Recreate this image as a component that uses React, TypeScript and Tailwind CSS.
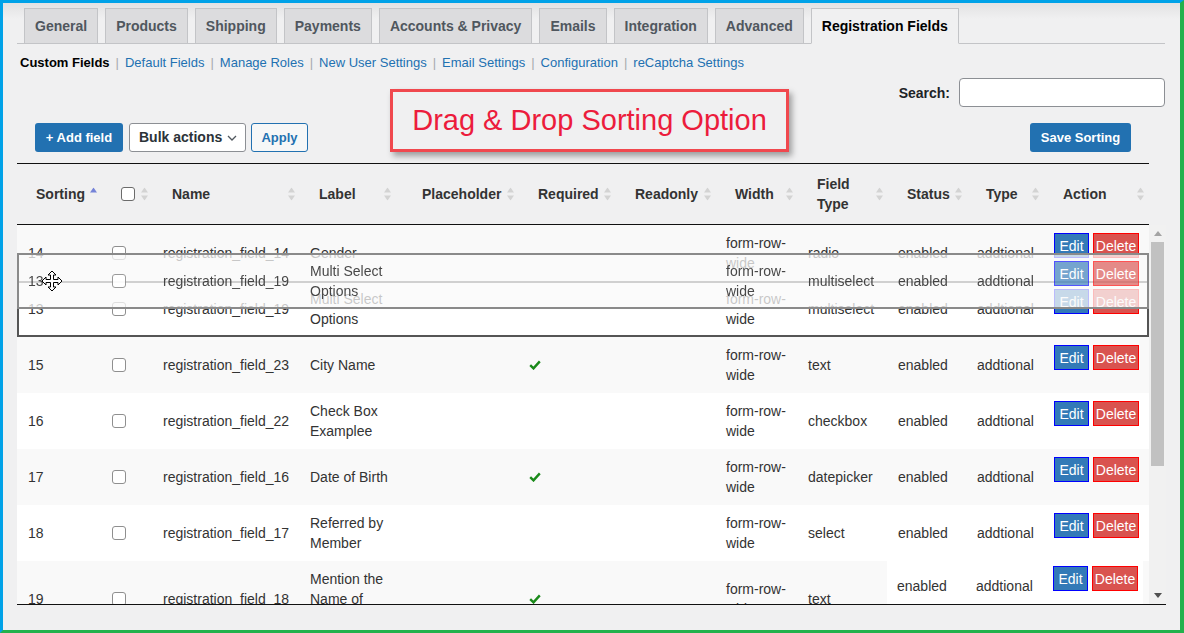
import React from "react";

const COLS =
  "grid grid-cols-[85px_51px_147px_103px_116px_97px_100px_82px_90px_79px_77px_105px]";

type Row = { n: string; name: string; label: string; req?: boolean; type: string };

const row14: Row = { n: "14", name: "registration_field_14", label: "Gender", type: "radio" };
const row13: Row = {
  n: "13",
  name: "registration_field_19",
  label: "Multi Select Options",
  type: "multiselect",
};
const rows: Row[] = [
  { n: "15", name: "registration_field_23", label: "City Name", req: true, type: "text" },
  { n: "16", name: "registration_field_22", label: "Check Box Examplee", type: "checkbox" },
  { n: "17", name: "registration_field_16", label: "Date of Birth", req: true, type: "datepicker" },
  { n: "18", name: "registration_field_17", label: "Referred by Member", type: "select" },
];

function Cb({ header }: { header?: boolean }) {
  return (
    <span
      className={
        "block w-[14px] h-[14px] rounded-[3px] border bg-white " +
        (header ? "border-[#6b6b6b]" : "border-[#8f8f8f]")
      }
    />
  );
}

function Check() {
  return (
    <svg width="12" height="10" viewBox="0 0 12 10" className="block">
      <path d="M1.2 5.2 L4.5 8.4 L10.8 1.4" fill="none" stroke="#1a8a1a" strokeWidth="2.4" />
    </svg>
  );
}

function SortArrows({ asc, cls }: { asc?: boolean; cls: string }) {
  return (
    <svg width="7" height="13" viewBox="0 0 7 13" className={"absolute top-1/2 -translate-y-1/2 " + cls}>
      {asc ? (
        <path d="M0 5 L3.5 0 L7 5 Z" fill="#7583d8" />
      ) : (
        <>
          <path d="M0 5 L3.5 0 L7 5 Z" fill="#d3d3d3" />
          <path d="M0 8 L7 8 L3.5 13 Z" fill="#d3d3d3" />
        </>
      )}
    </svg>
  );
}

function Buttons({ faded }: { faded?: boolean }) {
  return (
    <div className={"flex gap-[4px] " + (faded ? "opacity-75" : "")}>
      <span className="h-[25px] w-[35px] bg-[#337ab7] border border-[#0000ff] text-white text-[14px] leading-none flex items-center justify-center">
        Edit
      </span>
      <span className="h-[25px] w-[46px] bg-[#d9534f] border border-[#ff0000] text-white text-[14px] leading-none flex items-center justify-center">
        Delete
      </span>
    </div>
  );
}

function RowCells({ r, faded, noTail }: { r: Row; faded?: boolean; noTail?: boolean }) {
  return (
    <>
      <div className="pl-[11px]">{r.n}</div>
      <div className="pl-[10px]">
        <Cb />
      </div>
      <div className="pl-[10px] whitespace-nowrap">{r.name}</div>
      <div className="px-[10px]">{r.label}</div>
      <div />
      <div className="pl-[10px]">{r.req ? <Check /> : null}</div>
      <div />
      <div className="px-[10px]">form-row-wide</div>
      <div className="pl-[10px]">{r.type}</div>
      <div className="pl-[10px]">{noTail ? null : "enabled"}</div>
      <div className="pl-[10px]">{noTail ? null : "addtional"}</div>
      <div className="pl-[10px] self-start pt-[8px]">{noTail ? null : <Buttons faded={faded} />}</div>
    </>
  );
}

function MoveCursor() {
  return (
    <svg width="22" height="22" viewBox="0 0 22 22" className="absolute left-[24px] top-[45px]">
      <path
        d="M11 1 L15 5 L12.5 5 L12.5 9.5 L17 9.5 L17 7 L21 11 L17 15 L17 12.5 L12.5 12.5 L12.5 17 L15 17 L11 21 L7 17 L9.5 17 L9.5 12.5 L5 12.5 L5 15 L1 11 L5 7 L5 9.5 L9.5 9.5 L9.5 5 L7 5 Z"
        fill="#ffffff"
        stroke="#000000"
        strokeWidth="1"
        strokeLinejoin="miter"
      />
    </svg>
  );
}

const tabs = [
  "General",
  "Products",
  "Shipping",
  "Payments",
  "Accounts & Privacy",
  "Emails",
  "Integration",
  "Advanced",
  "Registration Fields",
];

const subLinks = [
  "Default Fields",
  "Manage Roles",
  "New User Settings",
  "Email Settings",
  "Configuration",
  "reCaptcha Settings",
];

export default function App() {
  return (
    <div className="relative w-[1184px] h-[633px] overflow-hidden border-solid border-t-[3px] border-l-[3px] border-r-[4px] border-b-[3px] border-t-[#00a2e8] border-l-[#00a2e8] border-r-[#22b14c] border-b-[#22b14c] bg-[#f0f0f1] bg-[linear-gradient(to_bottom,#e2e2e3,#f0f0f1_16px)] font-['Liberation_Sans',Arial,sans-serif] text-[#333]">
      <div className="ml-[14px] w-[1149px]">
        {/* Tabs */}
        <div className="mt-[5px] w-[1148px] flex border-b border-[#c3c4c7]">
          {tabs.map((t, i) => {
            const active = i === tabs.length - 1;
            return (
              <div
                key={t}
                className={
                  "ml-[7px] -mb-px px-[10px] py-[5px] border text-[14px] leading-[24px] font-bold whitespace-nowrap " +
                  (active
                    ? "bg-[#f0f0f1] border-[#c3c4c7] border-b-[#f0f0f1] text-[#000]"
                    : "bg-[#dcdcde] border-[#c3c4c7] text-[#50575e]")
                }
              >
                {t}
              </div>
            );
          })}
        </div>

        {/* Sub navigation */}
        <div className="mt-[9px] pl-[3px] flex text-[13px] leading-[20px] whitespace-nowrap">
          <span className="font-bold text-[#000]">Custom Fields</span>
          {subLinks.map((l) => (
            <React.Fragment key={l}>
              <span className="mx-[6px] text-[#a7aaad]">|</span>
              <span className="text-[#2271b1]">{l}</span>
            </React.Fragment>
          ))}
        </div>

        {/* Search */}
        <div className="mt-[5px] w-[1148px] flex justify-end items-center h-[29px]">
          <span className="text-[14px] font-bold text-[#1d2327] mr-[9px] pt-[2px]">Search:</span>
          <div className="w-[206px] h-[29px] bg-white border border-[#8c8f94] rounded-[4px]" />
        </div>

        {/* Toolbar */}
        <div className="mt-[16px] w-[1132px] px-[18px] flex justify-between h-[29px]">
          <div className="flex">
            <span className="w-[88px] h-[29px] rounded-[3px] bg-[#2271b1] text-white text-[13px] font-bold flex items-center justify-center">
              + Add field
            </span>
            <span className="ml-[6px] w-[117px] h-[29px] rounded-[3px] bg-white border border-[#8c8f94] text-[14px] font-bold text-[#2c3338] flex items-center pl-[9px] pr-[8px] justify-between">
              Bulk actions
              <svg width="10" height="6" viewBox="0 0 10 6">
                <path d="M1 1 L5 5 L9 1" fill="none" stroke="#50575e" strokeWidth="1.3" />
              </svg>
            </span>
            <span className="ml-[5px] w-[57px] h-[29px] rounded-[3px] bg-[#f6f7f7] border border-[#2271b1] text-[#2271b1] text-[13px] font-bold flex items-center justify-center">
              Apply
            </span>
          </div>
          <span className="w-[101px] h-[29px] rounded-[3px] bg-[#2271b1] text-white text-[13px] font-bold flex items-center justify-center">
            Save Sorting
          </span>
        </div>

        {/* Table header */}
        <div className="mt-[11px] w-[1132px] pl-[1px] border-t border-b border-[#111] text-[14px] font-bold text-[#333] leading-[20px]">
          <div className={COLS + " h-[60px]"}>
            {[
              "Sorting",
              "cb",
              "Name",
              "Label",
              "Placeholder",
              "Required",
              "Readonly",
              "Width",
              "Field Type",
              "Status",
              "Type",
              "Action",
            ].map((h, i) => (
              <div key={h} className="relative flex items-center pl-[18px] whitespace-nowrap">
                {h === "cb" ? (
                  <Cb header />
                ) : h === "Field Type" ? (
                  <span>
                    Field
                    <br />
                    Type
                  </span>
                ) : (
                  h
                )}
                <SortArrows asc={i === 0} cls={i === 3 ? "right-[13px]" : "right-[6px]"} />
              </div>
            ))}
          </div>
        </div>

        {/* Table body */}
        <div className="relative w-[1149px] h-[380px] overflow-hidden border-b border-[#111] flex text-[14px] leading-[20px] text-[#333]">
          <div className="relative w-[1132px]">
            <div className={COLS + " items-center h-[56px] bg-[#f9f9f9]"}>
              <RowCells r={row14} />
            </div>
            <div className={COLS + " items-center h-[56px] bg-white"}>
              <RowCells r={row13} />
            </div>
            {rows.map((r, i) => (
              <div
                key={r.n}
                className={COLS + " items-center h-[56px] " + (i % 2 === 0 ? "bg-[#f9f9f9]" : "bg-white")}
              >
                <RowCells r={r} />
              </div>
            ))}
            <div className={COLS + " items-center h-[76px] bg-[#f9f9f9]"}>
              <RowCells
                r={{
                  n: "19",
                  name: "registration_field_18",
                  label: "Mention the Name of Referrer",
                  req: true,
                  type: "text",
                }}
                noTail
              />
            </div>

            {/* placeholder outline */}
            <div className="absolute left-0 top-[56px] w-[1132px] h-[56px] border-2 border-[#555]" />

            {/* drag helper */}
            <div className="absolute left-0 top-[28px] w-[1132px] h-[56px] border-2 border-[#8a8a8a] bg-[#fafafa]/75" />
            <div className={"absolute left-0 top-[28px] w-[1132px] h-[56px] items-center opacity-90 " + COLS}>
              <RowCells r={row13} faded />
            </div>
            <MoveCursor />

            {/* row 19 render artifact */}
            <div className="absolute left-[870px] top-[331px] w-[256px] h-[60px] bg-white grid grid-cols-[79px_77px_100px]">
              <div className="pl-[10px] pt-[20px]">enabled</div>
              <div className="pl-[10px] pt-[20px]">addtional</div>
              <div className="pl-[10px] pt-[10px]">
                <Buttons />
              </div>
            </div>
          </div>

          {/* scrollbar */}
          <div className="w-[17px] h-full bg-[#f1f1f1] flex flex-col items-center">
            <div className="h-[17px] w-full flex items-center justify-center">
              <svg width="8" height="5" viewBox="0 0 8 5">
                <path d="M0 5 L4 0 L8 5 Z" fill="#a3a3a3" />
              </svg>
            </div>
            <div className="w-[13px] h-[224px] bg-[#c1c1c1]" />
            <div className="flex-1" />
            <div className="h-[17px] w-full flex items-center justify-center">
              <svg width="8" height="5" viewBox="0 0 8 5">
                <path d="M0 0 L8 0 L4 5 Z" fill="#505050" />
              </svg>
            </div>
          </div>
        </div>
      </div>

      {/* annotation */}
      <div className="absolute left-[387px] top-[86px] w-[399px] h-[63px] border-[3px] border-[#f0484e] shadow-[3px_4px_6px_rgba(0,0,0,0.35)] flex items-center justify-center">
        <span className="text-[29px] leading-none text-[#ec1c3c] whitespace-nowrap">
          Drag &amp; Drop Sorting Option
        </span>
      </div>
    </div>
  );
}
